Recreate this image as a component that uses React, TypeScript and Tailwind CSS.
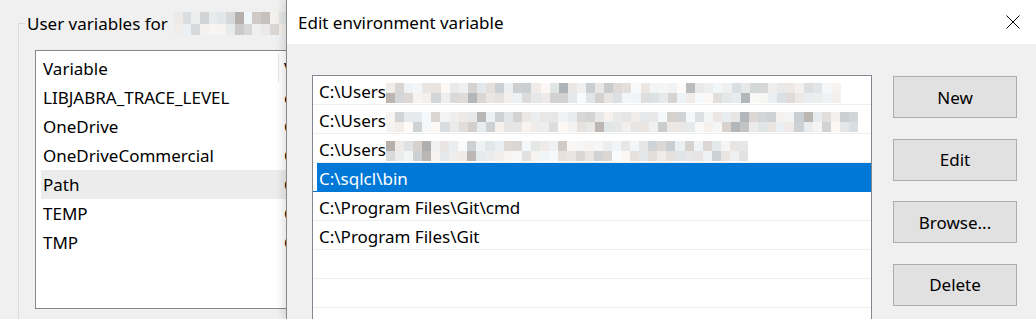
import React from "react";

function makeRng(seed: number) {
  let s = seed;
  return () => {
    s = (s * 1103515245 + 12345) % 2147483648;
    return s / 2147483648;
  };
}

function Mosaic({ cols, seed, className }: { cols: number; seed: number; className: string }) {
  const r = makeRng(seed);
  const rows = [0, 1].map(() =>
    Array.from({ length: cols }, () => {
      const v = r();
      let g: number;
      if (v < 0.1) g = 175 + r() * 30;
      else if (v < 0.36) g = 206 + r() * 20;
      else g = 228 + r() * 22;
      const t = (r() - 0.5) * 12;
      const c = (x: number) => Math.max(0, Math.min(255, Math.round(x)));
      return `rgb(${c(g + t)},${c(g)},${c(g - t * 0.6)})`;
    })
  );
  return (
    <span className={`flex flex-col shrink-0 ${className}`}>
      {rows.map((row, i) => (
        <span key={i} className="flex flex-1">
          {row.map((col, j) => (
            <span key={j} className="flex-1" style={{ backgroundColor: col }} />
          ))}
        </span>
      ))}
    </span>
  );
}

const backRows = [
  { name: "LIBJABRA_TRACE_LEVEL", value: "c" },
  { name: "OneDrive", value: "C" },
  { name: "OneDriveCommercial", value: "C" },
  { name: "Path", value: "C", hl: true },
  { name: "TEMP", value: "C" },
  { name: "TMP", value: "C" },
];

type PathRow = { text: string; blur?: { cols: number; cls: string; seed: number }; sel?: boolean };

const pathRows: PathRow[] = [
  { text: "C:\\Users", blur: { cols: 50, cls: "w-[455px] h-[20px]", seed: 11 } },
  { text: "C:\\Users", blur: { cols: 52, cls: "w-[472px] h-[20px]", seed: 27 } },
  { text: "C:\\Users", blur: { cols: 40, cls: "w-[362px] h-[20px]", seed: 43 } },
  { text: "C:\\sqlcl\\bin", sel: true },
  { text: "C:\\Program Files\\Git\\cmd" },
  { text: "C:\\Program Files\\Git" },
  { text: "" },
  { text: "" },
];

export default function App() {
  return (
    <div className="relative w-[1036px] h-[319px] overflow-hidden bg-[#f0f0f0] text-black font-['Noto_Sans',sans-serif] text-[17px]">
      {/* Background window: Environment Variables */}
      <div className="pl-[18px] pt-[12px]">
        <fieldset className="border-l border-t border-[#dcdcdc] pl-[16px] pt-[15px] w-[760px] h-[400px]">
          <legend className="-ml-[10px] px-[2px]">
            <span className="flex items-center leading-[23px] h-[23px]">
              <span>User variables for</span>
              <Mosaic cols={14} seed={5} className="ml-[6px] w-[122px] h-[23px]" />
            </span>
          </legend>
          <div className="w-[640px] h-[259px] border border-[#828790] bg-white pt-[3px] px-[5px]">
            <div className="flex h-[29px] leading-[30px]">
              <div className="w-[237px] pl-[2px]">Variable</div>
              <div className="w-px h-[30px] -mt-[1px] bg-[#e5e5e5]" />
              <div className="pl-[5px] w-[12px] overflow-hidden">V</div>
            </div>
            {backRows.map((row) => (
              <div
                key={row.name}
                className={`flex h-[29px] leading-[30px] ${row.hl ? "bg-[#ececec]" : ""}`}
              >
                <div className="w-[243px] pl-[2px]">{row.name}</div>
                <div className="w-[10px] overflow-hidden">{row.value}</div>
              </div>
            ))}
          </div>
        </fieldset>
      </div>

      {/* Foreground dialog: Edit environment variable */}
      <div className="absolute left-[286px] top-0 w-[750px] h-[319px] border-l border-[#8a8a8a] shadow-[-3px_0_8px_rgba(0,0,0,0.12)] flex flex-col">
        <div className="h-[44px] bg-white flex items-center justify-between pl-[11px] pr-[16px] shrink-0">
          <span className="leading-[23px]">Edit environment variable</span>
          <svg width="14" height="14" viewBox="0 0 14 14" className="shrink-0">
            <path d="M0.5 0.5 L13.5 13.5 M13.5 0.5 L0.5 13.5" stroke="#000" strokeWidth="1" fill="none" />
          </svg>
        </div>
        <div className="flex-1 bg-[#f0f0f0] flex items-start pl-[25px] pt-[31px] gap-[21px]">
          <div className="w-[560px] h-[300px] border border-[#828790] bg-white shrink-0">
            {pathRows.map((row, i) => (
              <div
                key={i}
                className={`h-[29px] flex border-b ${row.sel ? "border-[#0078d7]" : "border-[#efefef]"}`}
              >
                <div
                  className={`ml-[4px] flex-1 flex items-center pl-[2px] pt-[3px] whitespace-nowrap overflow-hidden ${
                    row.sel ? "bg-[#0078d7] text-white" : ""
                  }`}
                >
                  <span className="leading-[23px]">{row.text}</span>
                  {row.blur && <Mosaic cols={row.blur.cols} seed={row.blur.seed} className={`mt-[2px] ${row.blur.cls}`} />}
                </div>
              </div>
            ))}
          </div>
          <div className="flex flex-col gap-[20.5px] pt-[1px]">
            {["New", "Edit", "Browse...", "Delete"].map((b) => (
              <button
                key={b}
                className="w-[124px] h-[42px] border border-[#adadad] bg-[#e1e1e1] flex items-center justify-center leading-[23px]"
              >
                {b}
              </button>
            ))}
          </div>
        </div>
      </div>
    </div>
  );
}
